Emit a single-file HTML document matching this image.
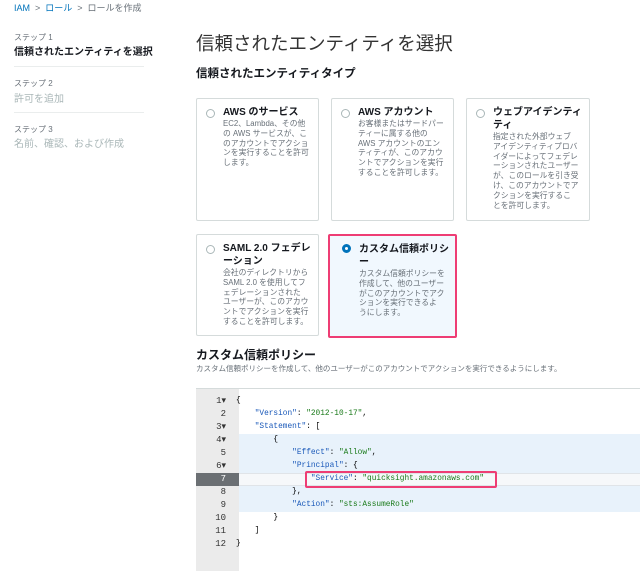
<!DOCTYPE html>
<html><head><meta charset="utf-8"><style>
*{margin:0;padding:0;box-sizing:border-box}
body{width:640px;height:570px;overflow:hidden;background:#fff;font-family:"Liberation Sans","Noto Sans CJK JP",sans-serif;color:#16191f;position:relative}
.a{position:absolute;white-space:nowrap}
.bc{top:1px;left:14px;font-size:9px;color:#687078}
.bc b{color:#0073bb;font-weight:normal}
.sl{font-size:8px;color:#687078;left:14px}
.sv{font-size:10px;left:14px;color:#aab7b8}
.hr{position:absolute;left:14px;width:130px;height:1px;background:#eaeded}
.card{position:absolute;border:1px solid #d5dbdb;border-radius:2px;background:#fff;padding:7px 4px 0 26px;font-size:7.8px;line-height:9.8px;color:#687078;white-space:nowrap;overflow:hidden}
.card h4{font-size:10px;font-weight:bold;color:#16191f;line-height:13px;margin-bottom:0}
.card i{position:absolute;left:9px;top:10px;width:9px;height:9px;border:1px solid #aab7b8;border-radius:50%}
.ed{position:absolute;left:196px;top:388px;width:444px;height:182px;background:#fff;border-top:1px solid #d5dbdb;font-family:"Liberation Mono",monospace;font-size:7.8px}
.gut{position:absolute;left:0;top:0;width:43px;height:182px;background:#ebebeb}
.ln{position:absolute;left:0;width:444px;height:13px;line-height:13px}
.ln .n{position:absolute;left:0;width:30px;text-align:right;color:#333;font-size:9px}
.ln .c{position:absolute;left:40px;white-space:pre;color:#000}
.k{color:#1a59b9}.s{color:#1a7a1a}
</style></head><body>
<div class="a bc"><b>IAM</b> &nbsp;&gt;&nbsp; <b>ロール</b> &nbsp;&gt;&nbsp; ロールを作成</div>
<div class="a sl" style="top:32px">ステップ 1</div>
<div class="a" style="left:14px;top:43px;font-size:10px;font-weight:bold">信頼されたエンティティを選択</div>
<div class="hr" style="top:66px"></div>
<div class="a sl" style="top:78px">ステップ 2</div>
<div class="a sv" style="top:90px">許可を追加</div>
<div class="hr" style="top:112px"></div>
<div class="a sl" style="top:124px">ステップ 3</div>
<div class="a sv" style="top:135px">名前、確認、および作成</div>
<div class="a" style="left:196px;top:30px;font-size:18.5px;color:#333">信頼されたエンティティを選択</div>
<div class="a" style="left:196px;top:65px;font-size:11.5px;font-weight:bold">信頼されたエンティティタイプ</div>

<div class="card" style="left:196px;top:98px;width:123px;height:123px"><i></i><h4>AWS のサービス</h4>EC2、Lambda、その他<br>の AWS サービスが、こ<br>のアカウントでアクショ<br>ンを実行することを許可<br>します。</div>
<div class="card" style="left:331px;top:98px;width:123px;height:123px"><i></i><h4>AWS アカウント</h4>お客様またはサードパー<br>ティーに属する他の<br>AWS アカウントのエン<br>ティティが、このアカウ<br>ントでアクションを実行<br>することを許可します。</div>
<div class="card" style="left:466px;top:98px;width:124px;height:123px"><i></i><h4>ウェブアイデンティ<br>ティ</h4>指定された外部ウェブ<br>アイデンティティプロバ<br>イダーによってフェデレ<br>ーションされたユーザー<br>が、このロールを引き受<br>け、このアカウントでア<br>クションを実行するこ<br>とを許可します。</div>
<div class="card" style="left:196px;top:234px;width:123px;height:102px"><i></i><h4>SAML 2.0 フェデレ<br>ーション</h4>会社のディレクトリから<br>SAML 2.0 を使用してフ<br>ェデレーションされた<br>ユーザーが、このアカウ<br>ントでアクションを実行<br>することを許可します。</div>
<div class="card" style="left:328px;top:234px;width:129px;height:104px;background:#f1f8fe;border:2px solid #ee3d74"><i style="border:3px solid #0073bb;background:#fff;left:12px;top:8px"></i><h4 style="margin-left:3px">カスタム信頼ポリシ<br>ー</h4><div style="margin-left:3px">カスタム信頼ポリシーを<br>作成して、他のユーザー<br>がこのアカウントでアク<br>ションを実行できるよ<br>うにします。</div></div>

<div class="a" style="left:196px;top:346px;font-size:12px;font-weight:bold">カスタム信頼ポリシー</div>
<div class="a" style="left:196px;top:363px;font-size:7.5px;color:#687078">カスタム信頼ポリシーを作成して、他のユーザーがこのアカウントでアクションを実行できるようにします。</div>

<div class="ed">
<div class="gut"></div>
<div style="position:absolute;left:43px;top:45px;width:401px;height:78px;background:#e8f2fb"></div>
<div style="position:absolute;left:0;top:84px;width:43px;height:13px;background:#6b6f73"></div>
<div style="position:absolute;left:43px;top:84px;width:401px;height:13px;background:#f6f8fa;border-top:1px solid #e0e4e8;border-bottom:1px solid #e0e4e8"></div>
<div class="ln" style="top:6px"><span class="n">1▾</span><span class="c">{</span></div>
<div class="ln" style="top:19px"><span class="n">2</span><span class="c">    <span class="k">"Version"</span>: <span class="s">"2012-10-17"</span>,</span></div>
<div class="ln" style="top:32px"><span class="n">3▾</span><span class="c">    <span class="k">"Statement"</span>: [</span></div>
<div class="ln" style="top:45px"><span class="n">4▾</span><span class="c">        {</span></div>
<div class="ln" style="top:58px"><span class="n">5</span><span class="c">            <span class="k">"Effect"</span>: <span class="s">"Allow"</span>,</span></div>
<div class="ln" style="top:71px"><span class="n">6▾</span><span class="c">            <span class="k">"Principal"</span>: {</span></div>
<div class="ln" style="top:84px"><span class="n" style="color:#fff">7</span><span class="c">                <span class="k">"Service"</span>: <span class="s">"quicksight.amazonaws.com"</span></span></div>
<div class="ln" style="top:97px"><span class="n">8</span><span class="c">            },</span></div>
<div class="ln" style="top:110px"><span class="n">9</span><span class="c">            <span class="k">"Action"</span>: <span class="s">"sts:AssumeRole"</span></span></div>
<div class="ln" style="top:123px"><span class="n">10</span><span class="c">        }</span></div>
<div class="ln" style="top:136px"><span class="n">11</span><span class="c">    ]</span></div>
<div class="ln" style="top:149px"><span class="n">12</span><span class="c">}</span></div>
<div style="position:absolute;left:109px;top:82px;width:192px;height:17px;border:2px solid #ee3d74;border-radius:2px"></div>
</div>
</body></html>
